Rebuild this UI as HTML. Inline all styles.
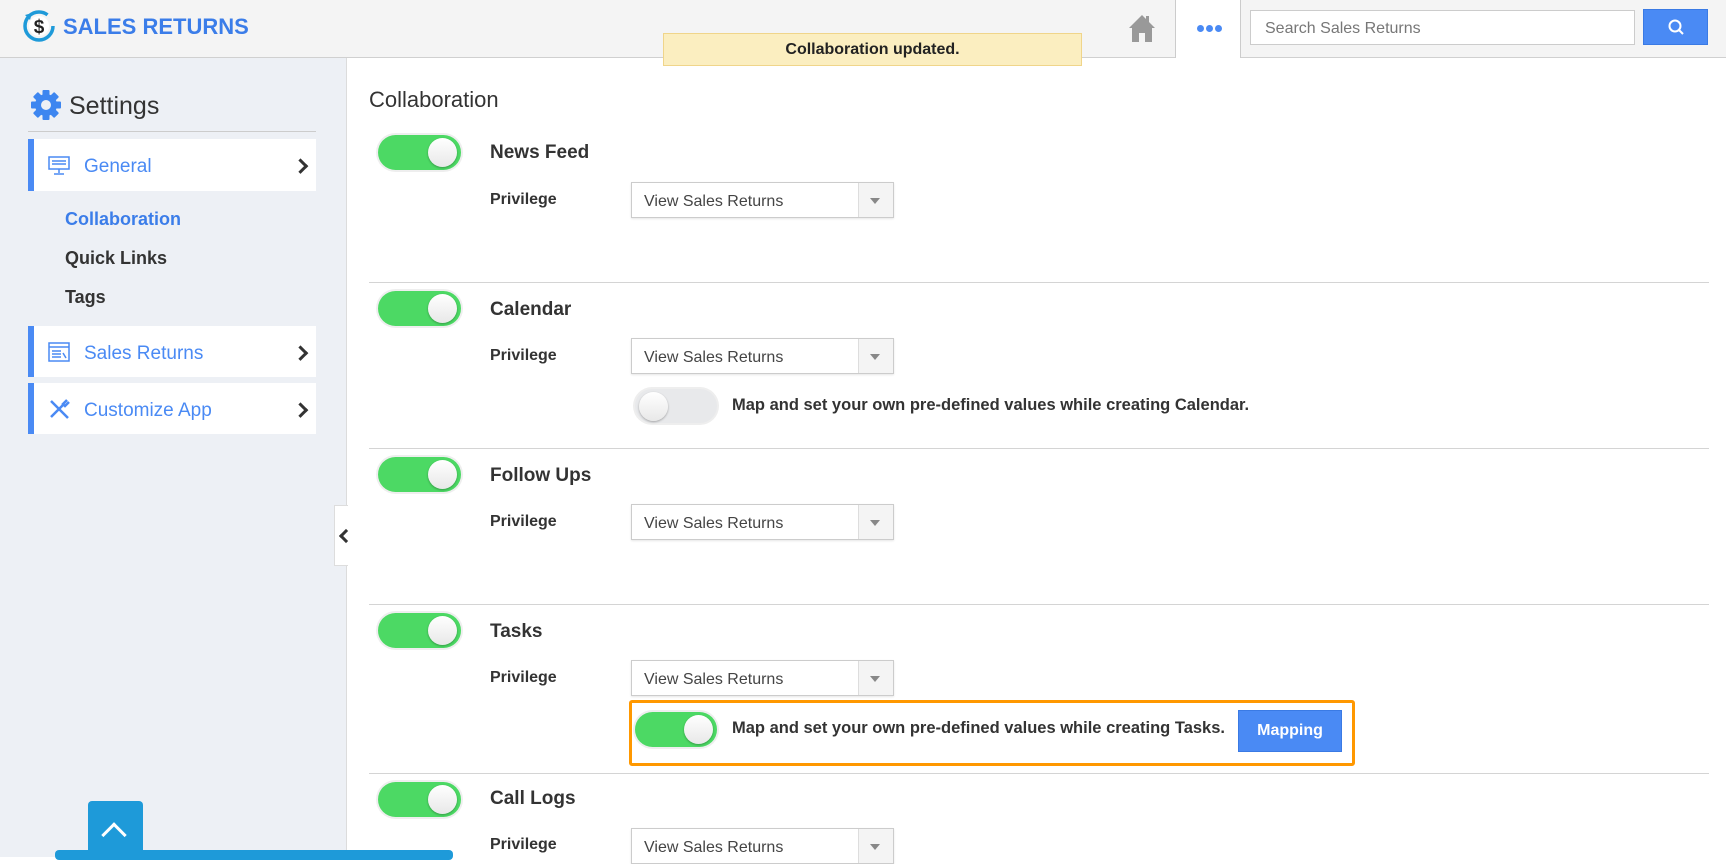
<!DOCTYPE html>
<html><head><meta charset="utf-8"><style>
*{box-sizing:border-box;margin:0;padding:0}
body{width:1726px;height:857px;overflow:hidden;background:#fff;font-family:"Liberation Sans",Arial,sans-serif;position:relative;color:#333}
.a{position:absolute}
.hdr{left:0;top:0;width:1726px;height:58px;background:#f4f4f4;border-bottom:1px solid #d0d0d0}
.side{left:0;top:58px;width:347px;height:799px;background:#edf0f5;border-right:1px solid #dcdcdc}
.item{left:28px;width:288px;background:#fff;border-left:6px solid #4a8af4;color:#4a8af4;font-size:19px}
.item span{position:absolute;left:50px;top:50%;transform:translateY(-42%)}
.chev{position:absolute;right:10px;top:50%;width:11px;height:11px;border-right:3px solid #333;border-top:3px solid #333;transform:translateY(-40%) rotate(45deg)}
.sub{left:65px;font-size:18px;font-weight:bold;color:#333}
.tog{width:83px;height:35px;border-radius:18px;background:#4cd964;box-shadow:0 0 0 2px #eee}
.tog::after{content:"";position:absolute;right:4px;top:3px;width:29px;height:29px;border-radius:50%;background:linear-gradient(#fff,#e8e8e8);box-shadow:0 1px 2px rgba(0,0,0,.3)}
.tog.off{background:#e8e9eb}
.tog.off::after{left:4px;right:auto}
.ttl{left:490px;font-size:19px;font-weight:bold;color:#333}
.priv{left:490px;font-size:16px;font-weight:bold;color:#333}
.sel{left:631px;width:263px;height:36px;border:1px solid #ccc;box-shadow:0 1px 2px rgba(0,0,0,.1);font-size:16px;color:#444;padding:10px 0 0 12px;background:#fff}
.sel::after{content:"";position:absolute;right:0;top:0;width:34px;height:100%;border-left:1px solid #ddd;background:#f4f4f4}
.sel i{position:absolute;right:13px;top:15px;border-left:5px solid transparent;border-right:5px solid transparent;border-top:6px solid #888;z-index:1}
.line{left:369px;width:1340px;height:1px;background:#d4d4d4}
.map{left:732px;font-size:16.5px;font-weight:bold;color:#333}
</style></head><body>
<div class="a hdr"></div>
<svg class="a" style="left:22px;top:9px" width="34" height="34" viewBox="0 0 34 34"><circle cx="17" cy="17" r="14" fill="none" stroke="#1e9ad9" stroke-width="3.5" stroke-dasharray="75 20"/><path d="M3 6 L10 4 L8 11Z" fill="#1e9ad9"/><circle cx="17" cy="17" r="10" fill="#fff"/><text x="17" y="24" font-size="19" font-weight="bold" text-anchor="middle" fill="#222" font-family="Liberation Sans">$</text></svg>
<div class="a" style="left:63px;top:14px;font-size:22px;font-weight:bold;color:#3b7de9">SALES RETURNS</div>
<svg class="a" style="left:1128px;top:13px" width="28" height="30" viewBox="0 0 28 30"><path d="M14 2 L1 15 L4 15 L4 29 L11 29 L11 20 L17 20 L17 29 L24 29 L24 15 L27 15 L21 9 L21 3 L18 3 L18 6Z" fill="#999"/></svg>
<div class="a" style="left:1175px;top:0;width:66px;height:58px;background:#fff;border-left:1px solid #ccc;border-right:1px solid #ccc"></div>
<div class="a" style="left:1197px;top:25px;font-size:0"><span style="display:inline-block;width:7px;height:7px;border-radius:50%;background:#4a8af4;margin-right:2px"></span><span style="display:inline-block;width:7px;height:7px;border-radius:50%;background:#4a8af4;margin-right:2px"></span><span style="display:inline-block;width:7px;height:7px;border-radius:50%;background:#4a8af4"></span></div>
<div class="a" style="left:1250px;top:10px;width:385px;height:35px;background:#fff;border:1px solid #ccc;font-size:16px;color:#777;padding:9px 0 0 14px">Search Sales Returns</div>
<div class="a" style="left:1643px;top:9px;width:65px;height:36px;background:#4a8af4;border:1px solid #3a7ae4"><svg width="65" height="36"><circle cx="31" cy="16" r="5.5" fill="none" stroke="#fff" stroke-width="2"/><path d="M35 20 L39 24" stroke="#fff" stroke-width="2"/></svg></div>
<div class="a side"></div>
<div class="a" style="left:663px;top:33px;width:419px;height:33px;background:#fbeec0;border:1px solid #f0d58a;font-size:16px;font-weight:bold;color:#222;text-align:center;padding-top:7px">Collaboration updated.</div>
<svg class="a" style="left:30px;top:89px" width="32" height="32" viewBox="0 0 32 32"><g fill="#3d86f0"><circle cx="16" cy="16" r="11"/><g id="t"><rect x="12.5" y="1" width="7" height="7" rx="1"/><rect x="12.5" y="24" width="7" height="7" rx="1"/></g><use href="#t" transform="rotate(45 16 16)"/><use href="#t" transform="rotate(90 16 16)"/><use href="#t" transform="rotate(135 16 16)"/></g><circle cx="16" cy="16" r="5" fill="#edf0f5"/></svg>
<div class="a" style="left:69px;top:92px;font-size:25px;color:#333">Settings</div>
<div class="a" style="left:28px;top:131px;width:288px;height:1px;background:#ccc"></div>
<div class="a item" style="top:139px;height:52px"><svg class="a" style="left:14px;top:17px" width="22" height="20"><rect x="1" y="1" width="20" height="12" fill="none" stroke="#4a8af4" stroke-width="1.5"/><path d="M4 5h14M4 8h14M11 13v4M6 18h10" stroke="#4a8af4" stroke-width="1.5"/></svg><span>General</span><div class="chev"></div></div>
<div class="a sub" style="top:209px;color:#3b7de9">Collaboration</div>
<div class="a sub" style="top:248px">Quick Links</div>
<div class="a sub" style="top:287px">Tags</div>
<div class="a item" style="top:326px;height:51px"><svg class="a" style="left:14px;top:16px" width="22" height="20"><rect x="1" y="1" width="20" height="18" fill="none" stroke="#4a8af4" stroke-width="1.5"/><path d="M1 5h20M4 9h9M4 12h9M4 15h9M15 11l3 5" stroke="#4a8af4" stroke-width="1.5"/></svg><span>Sales Returns</span><div class="chev"></div></div>
<div class="a item" style="top:383px;height:51px"><svg class="a" style="left:14px;top:15px" width="22" height="22"><path d="M3 3l17 17M19 2l-4 4 2 2 4-4M16 6L3 19" stroke="#4a8af4" stroke-width="2.5" fill="none"/></svg><span>Customize App</span><div class="chev"></div></div>
<div class="a" style="left:334px;top:505px;width:14px;height:61px;background:#fff;border:1px solid #ddd;border-right:none"></div>
<div class="a" style="left:341px;top:531px;width:10px;height:10px;border-left:3px solid #333;border-bottom:3px solid #333;transform:rotate(45deg)"></div>
<div class="a" style="left:55px;top:850px;width:398px;height:10px;background:#1e9ad9;border-radius:4px"></div>
<div class="a" style="left:88px;top:801px;width:55px;height:56px;background:#1e9ad9;border-radius:4px 4px 0 0"></div>
<div class="a" style="left:105px;top:826px;width:18px;height:18px;border-left:3px solid #fff;border-top:3px solid #fff;transform:rotate(45deg)"></div>

<div class="a" style="left:369px;top:87px;font-size:22px;color:#333">Collaboration</div>

<div class="a tog" style="left:378px;top:135px"></div>
<div class="a ttl" style="top:142px">News Feed</div>
<div class="a priv" style="top:191px">Privilege</div>
<div class="a sel" style="top:182px">View Sales Returns<i></i></div>
<div class="a line" style="top:282px"></div>

<div class="a tog" style="left:378px;top:291px"></div>
<div class="a ttl" style="top:299px">Calendar</div>
<div class="a priv" style="top:347px">Privilege</div>
<div class="a sel" style="top:338px">View Sales Returns<i></i></div>
<div class="a tog off" style="left:635px;top:389px;width:82px;height:34px"></div>
<div class="a map" style="top:396px">Map and set your own pre-defined values while creating Calendar.</div>
<div class="a line" style="top:448px"></div>

<div class="a tog" style="left:378px;top:457px"></div>
<div class="a ttl" style="top:465px">Follow Ups</div>
<div class="a priv" style="top:513px">Privilege</div>
<div class="a sel" style="top:504px">View Sales Returns<i></i></div>
<div class="a line" style="top:604px"></div>

<div class="a tog" style="left:378px;top:613px"></div>
<div class="a ttl" style="top:621px">Tasks</div>
<div class="a priv" style="top:669px">Privilege</div>
<div class="a sel" style="top:660px">View Sales Returns<i></i></div>
<div class="a" style="left:629px;top:700px;width:726px;height:66px;border:3px solid #ff9800;border-radius:3px"></div>
<div class="a tog" style="left:635px;top:712px;width:82px;height:35px"></div>
<div class="a map" style="top:719px">Map and set your own pre-defined values while creating Tasks.</div>
<div class="a" style="left:1238px;top:710px;width:104px;height:42px;background:#4a8af4;border:1px solid #3a7ae4;color:#fff;font-size:16px;font-weight:bold;text-align:center;padding-top:11px">Mapping</div>
<div class="a line" style="top:773px"></div>

<div class="a tog" style="left:378px;top:782px"></div>
<div class="a ttl" style="top:788px">Call Logs</div>
<div class="a priv" style="top:836px">Privilege</div>
<div class="a sel" style="top:828px">View Sales Returns<i></i></div>
</body></html>
